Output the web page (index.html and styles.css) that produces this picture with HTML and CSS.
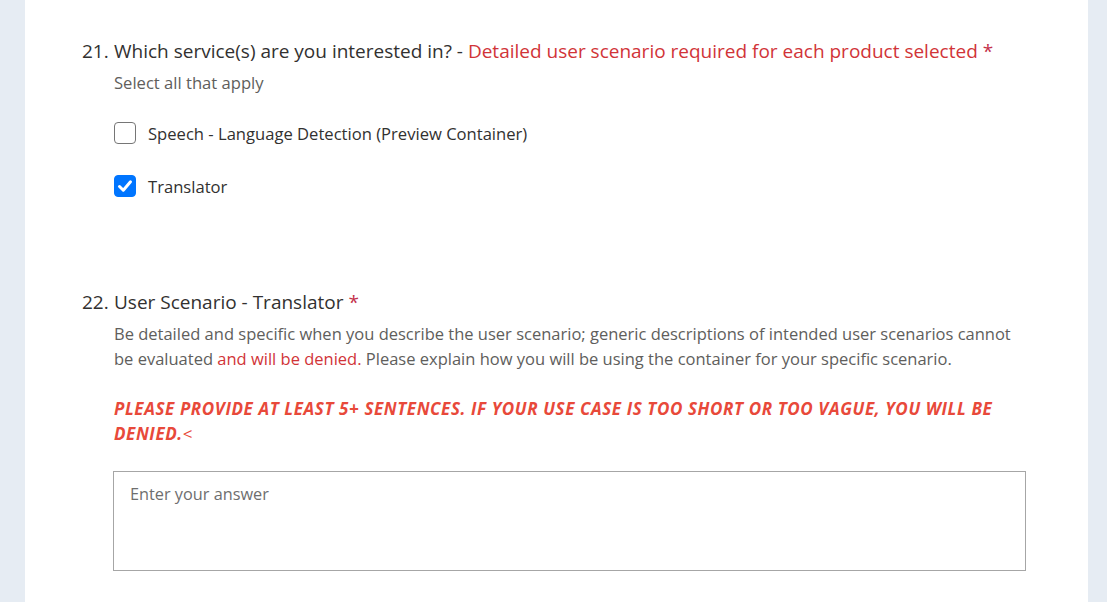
FILE: index.html
```html
<!DOCTYPE html>
<html lang="en">
<head>
<meta charset="utf-8">
<title>Form</title>
<link rel="stylesheet" href="styles.css">
</head>
<body>
<div class="page">
  <main class="card">
    <section class="question q21">
      <div class="q-num">21.</div>
      <div class="q-body">
        <div class="q-title">Which service(s) are you interested in? - <span class="red">Detailed user scenario required for each product selected</span> <span class="req">*</span></div>
        <div class="q-sub">Select all that apply</div>
        <div class="options">
          <label class="option"><span class="box"></span><span class="opt-text">Speech - Language Detection (Preview Container)</span></label>
          <label class="option"><span class="box checked"><svg viewBox="0 0 22 22" width="22" height="22"><path d="M5.5 11.5 L9.3 15.2 L16.5 6.8" fill="none" stroke="#fff" stroke-width="3" stroke-linecap="round" stroke-linejoin="round"/></svg></span><span class="opt-text">Translator</span></label>
        </div>
      </div>
    </section>
    <section class="question q22">
      <div class="q-num">22.</div>
      <div class="q-body">
        <div class="q-title">User Scenario - Translator <span class="req">*</span></div>
        <p class="q-desc">Be detailed and specific when you describe the user scenario; generic descriptions of intended user scenarios cannot be evaluated <span class="red">and will be denied.</span> Please explain how you will be using the container for your specific scenario.</p>
        <p class="q-warn">PLEASE PROVIDE AT LEAST 5+ SENTENCES. IF YOUR USE CASE IS TOO SHORT OR TOO VAGUE, YOU WILL BE DENIED.<span class="lt">&lt;</span></p>
        <div class="answer">Enter your answer</div>
      </div>
    </section>
  </main>
</div>
</body>
</html>
```

FILE: styles.css
```css
html, body {
  margin: 0;
  padding: 0;
}
body {
  background: #e6ecf3;
  font-family: "Open Sans", Arial, sans-serif;
  color: #323130;
  width: 1107px;
  height: 602px;
  overflow: hidden;
}
.page {
  padding: 0 19px 0 25px;
  height: 602px;
}
.card {
  background: #ffffff;
  height: 602px;
  padding: 39px 0 0 57px;
  box-sizing: border-box;
}
.question {
  display: grid;
  grid-template-columns: 32px 900px;
}
.q-num {
  font-size: 19px;
  line-height: 24px;
  color: #323130;
}
.q-title {
  font-size: 19px;
  line-height: 24px;
  color: #323130;
}
.red {
  color: #d13438;
}
.req {
  color: #c4314b;
}
.q-sub {
  margin-top: 9px;
  font-size: 16.6px;
  line-height: 22px;
  color: #605e5c;
}
.options {
  margin-top: 28px;
  display: flex;
  flex-direction: column;
  gap: 31px;
}
.option {
  display: flex;
  align-items: center;
  gap: 12px;
  height: 22px;
}
.box {
  width: 22px;
  height: 22px;
  box-sizing: border-box;
  border: 1.5px solid #767676;
  border-radius: 4px;
  background: #fff;
  flex: none;
}
.box.checked {
  background: #0075ff;
  border-color: #0075ff;
  display: flex;
  align-items: center;
  justify-content: center;
}
.box.checked svg {
  display: block;
  margin: -1.5px;
}
.opt-text {
  font-size: 16.6px;
  line-height: 24px;
  color: #323130;
  position: relative;
  top: 1px;
}
.q22 {
  margin-top: 93px;
}
.q-desc {
  margin: 7px 0 0;
  font-size: 16.5px;
  line-height: 25px;
  color: #605e5c;
}
.q-warn {
  margin: 25px 0 0;
  font-size: 17px;
  line-height: 25px;
  letter-spacing: 0.6px;
  font-weight: 700;
  font-style: italic;
  color: #e8493a;
}
.lt {
  font-weight: 400;
  font-style: normal;
  letter-spacing: 0;
}
.answer {
  margin: 25px 0 0 -1px;
  width: 913px;
  height: 100px;
  box-sizing: border-box;
  border: 1px solid #a6a6a6;
  padding: 10px 16px;
  font-size: 16.3px;
  line-height: 24px;
  color: #6e6e6e;
}
```
